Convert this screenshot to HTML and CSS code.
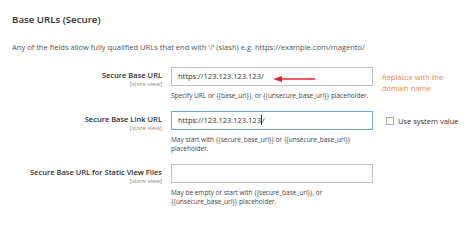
FILE: index.html
```html
<!DOCTYPE html>
<html>
<head>
<meta charset="utf-8">
<link rel="stylesheet" href="styles.css">
</head>
<body>
<div class="page">
  <h2 class="title">Base URLs (Secure)</h2>
  <p class="desc">Any of the fields allow fully qualified URLs that end with '/' (slash) e.g. https://example.com/magento/</p>

  <div class="row">
    <div class="label">
      <span class="name">Secure Base URL</span>
      <span class="scope">[store view]</span>
    </div>
    <div class="control">
      <div class="input-wrap">
        <div class="input">https://123.123.123.123/</div>
        <svg class="arrow" width="44" height="8" viewBox="0 0 44 8">
          <line x1="6" y1="4" x2="42" y2="4" stroke="#e3232a" stroke-width="1.6"/>
          <polygon points="0,4 9,1 9,7" fill="#e3232a"/>
        </svg>
      </div>
      <div class="help">Specify URL or {{base_url}}, or {{unsecure_base_url}} placeholder.</div>
    </div>
    <div class="note">Replacce with the<br>domain name</div>
  </div>

  <div class="row">
    <div class="label">
      <span class="name">Secure Base Link URL</span>
      <span class="scope">[store view]</span>
    </div>
    <div class="control">
      <div class="input focused">https://123.123.123.12<span class="caret">3</span>/</div>
      <div class="help">May start with {{secure_base_url}} or {{unsecure_base_url}}<br>placeholder.</div>
    </div>
    <div class="use-system">
      <span class="checkbox"></span>
      <span class="use-text">Use system value</span>
    </div>
  </div>

  <div class="row">
    <div class="label">
      <span class="name">Secure Base URL for Static View Files</span>
      <span class="scope">[store view]</span>
    </div>
    <div class="control">
      <div class="input"></div>
      <div class="help">May be empty or start with {{secure_base_url}}, or<br>{{unsecure_base_url}} placeholder.</div>
    </div>
    <div></div>
  </div>
</div>
</body>
</html>
```

FILE: styles.css
```css
html, body {
  margin: 0;
  padding: 0;
  background: #ffffff;
}

body {
  font-family: "Open Sans", "DejaVu Sans", sans-serif;
  color: #303030;
}

.page {
  padding: 14px 0 0 12px;
}

.title {
  margin: 0;
  font-size: 9.7px;
  font-weight: 600;
  line-height: 12px;
  color: #333333;
}

.desc {
  margin: 16px 0 0;
  font-size: 7.55px;
  line-height: 10px;
  color: #555555;
}

.row {
  display: grid;
  grid-template-columns: 150px 202px auto;
  column-gap: 9px;
  align-items: start;
}

.desc + .row {
  margin-top: 15px;
}

.row + .row {
  margin-top: 11px;
}

.label {
  display: flex;
  flex-direction: column;
  align-items: flex-end;
  text-align: right;
  padding-top: 4px;
}

.name {
  font-size: 7.5px;
  font-weight: 600;
  line-height: 9px;
  color: #303030;
  white-space: nowrap;
}

.scope {
  font-size: 6px;
  line-height: 8px;
  color: #8a8a8a;
}

.control {
  display: flex;
  flex-direction: column;
}

.input-wrap {
  position: relative;
}

.input {
  box-sizing: border-box;
  height: 19px;
  border: 1px solid #c2c2c2;
  padding: 0 6px;
  font-size: 7.5px;
  line-height: 17px;
  color: #303030;
  background: #ffffff;
}

.input.focused {
  border-color: #6fa6d8;
}

.caret {
  border-right: 1px solid #303030;
}

.arrow {
  position: absolute;
  left: 102px;
  top: 8px;
}

.help {
  margin-top: 5px;
  font-size: 6.5px;
  line-height: 9px;
  color: #444444;
  white-space: nowrap;
}

.note {
  padding-top: 5px;
  font-size: 7.5px;
  line-height: 11px;
  color: #f0883e;
}

.use-system {
  display: flex;
  align-items: center;
  height: 19px;
  padding-left: 4px;
}

.checkbox {
  box-sizing: border-box;
  width: 8px;
  height: 8px;
  border: 1px solid #adadad;
  background: #ffffff;
  margin-right: 4px;
}

.use-text {
  font-size: 7.5px;
  color: #303030;
}
```
